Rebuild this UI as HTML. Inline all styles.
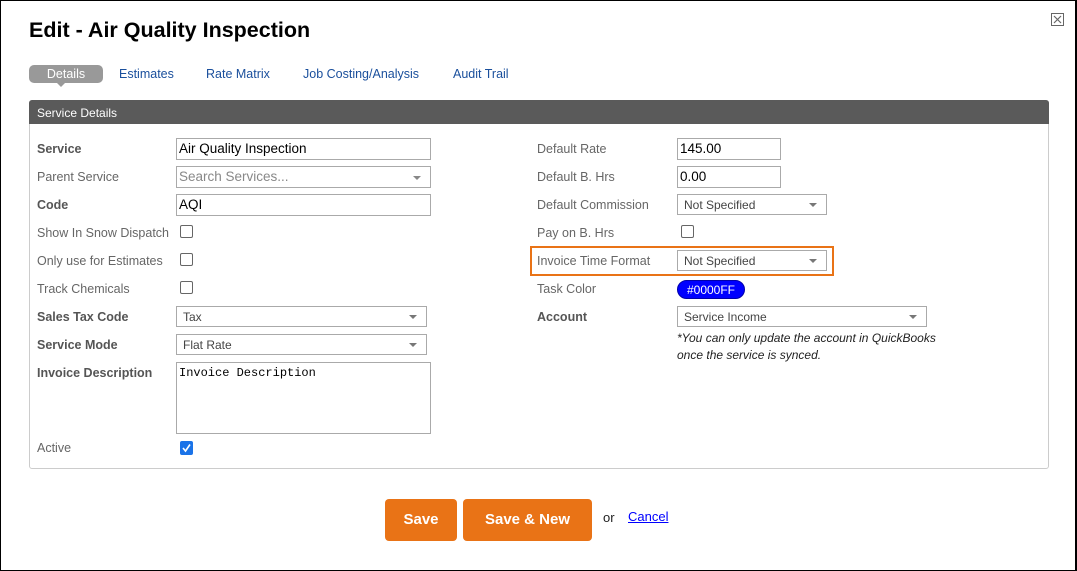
<!DOCTYPE html>
<html><head><style>
*{box-sizing:border-box;margin:0;padding:0}
body{width:1077px;height:571px;background:#fff;font-family:"Liberation Sans",sans-serif;position:relative;overflow:hidden}
.frame{position:absolute;left:0;top:0;width:1077px;height:571px;border:1px solid #000;border-right-width:2px}
.a{position:absolute}
h1{position:absolute;left:29px;top:18px;font-size:21.5px;font-weight:bold;color:#000}
.tab{position:absolute;top:67px;font-size:12.5px;color:#1a4f9c}
.lbl{position:absolute;font-size:12.5px;color:#666}
.b{font-weight:bold;color:#555}
.inp{position:absolute;height:22px;border:1px solid #aaa;font-size:13.5px;color:#000;padding:2px 2px;background:#fff}
.sel{position:absolute;height:21px;border:1px solid #aaa;font-size:12px;color:#444;padding:3px 6px;background:#fff}
.sel:after{content:"";position:absolute;right:9px;top:8px;border:4px solid transparent;border-top:4px solid #777;border-bottom:0}
.cb{position:absolute;width:13px;height:13px;border:1px solid #666;border-radius:2px;background:#fff}
.btn{position:absolute;top:499px;height:42px;background:#e97316;color:#fff;font-weight:bold;font-size:15px;border-radius:4px;text-align:center;line-height:42px}
</style></head><body>
<div class="frame"></div>
<h1>Edit - Air Quality Inspection</h1>
<div class="a" style="left:1051px;top:13px;width:13px;height:13px;border:1px solid #666"><svg width="11" height="11" style="position:absolute;left:0;top:0"><path d="M2 2L9 9M9 2L2 9" stroke="#666" stroke-width="1.2"/></svg></div>
<div class="a" style="left:29px;top:65px;width:74px;height:18px;background:#999;border-radius:5px;color:#fff;font-size:12.5px;text-align:center;line-height:18px">Details</div>
<div class="a" style="left:57px;top:83px;border:4px solid transparent;border-top:4px solid #999"></div>
<div class="tab" style="left:119px">Estimates</div>
<div class="tab" style="left:206px">Rate Matrix</div>
<div class="tab" style="left:303px">Job Costing/Analysis</div>
<div class="tab" style="left:453px">Audit Trail</div>
<div class="a" style="left:29px;top:100px;width:1020px;height:369px;border:1px solid #ccc;border-radius:3px"></div>
<div class="a" style="left:29px;top:100px;width:1020px;height:24px;background:#5a5a5a;color:#fff;font-size:12px;padding:6px 8px;border-radius:3px 3px 0 0">Service Details</div>

<div class="lbl b" style="left:37px;top:142px">Service</div>
<div class="inp" style="left:176px;top:138px;width:255px">Air Quality Inspection</div>
<div class="lbl" style="left:37px;top:170px">Parent Service</div>
<div class="inp" style="left:176px;top:166px;width:255px;color:#888">Search Services...</div>
<div class="a" style="left:413px;top:176px;border:4px solid transparent;border-top:4px solid #888"></div>
<div class="lbl b" style="left:37px;top:198px">Code</div>
<div class="inp" style="left:176px;top:194px;width:255px">AQI</div>
<div class="lbl" style="left:37px;top:226px">Show In Snow Dispatch</div>
<div class="cb" style="left:180px;top:225px"></div>
<div class="lbl" style="left:37px;top:254px">Only use for Estimates</div>
<div class="cb" style="left:180px;top:253px"></div>
<div class="lbl" style="left:37px;top:282px">Track Chemicals</div>
<div class="cb" style="left:180px;top:281px"></div>
<div class="lbl b" style="left:37px;top:310px">Sales Tax Code</div>
<div class="sel" style="left:176px;top:306px;width:251px">Tax</div>
<div class="lbl b" style="left:37px;top:338px">Service Mode</div>
<div class="sel" style="left:176px;top:334px;width:251px">Flat Rate</div>
<div class="lbl b" style="left:37px;top:366px">Invoice Description</div>
<div class="a" style="left:176px;top:362px;width:255px;height:72px;border:1px solid #aaa;font-family:'Liberation Mono',monospace;font-size:12px;padding:3px 2px">Invoice Description</div>
<div class="lbl" style="left:37px;top:441px">Active</div>
<div class="a" style="left:180px;top:441px;width:13px;height:14px;background:#1a73e8;border-radius:2px"><svg width="13" height="14" style="position:absolute"><path d="M3 7L5.5 10L10 3.5" stroke="#fff" stroke-width="1.6" fill="none"/></svg></div>

<div class="lbl" style="left:537px;top:142px">Default Rate</div>
<div class="inp" style="left:677px;top:138px;width:104px">145.00</div>
<div class="lbl" style="left:537px;top:170px">Default B. Hrs</div>
<div class="inp" style="left:677px;top:166px;width:104px">0.00</div>
<div class="lbl" style="left:537px;top:198px">Default Commission</div>
<div class="sel" style="left:677px;top:194px;width:150px">Not Specified</div>
<div class="lbl" style="left:537px;top:226px">Pay on B. Hrs</div>
<div class="cb" style="left:681px;top:225px"></div>
<div class="a" style="left:530px;top:246px;width:304px;height:30px;border:2px solid #e97316"></div>
<div class="lbl" style="left:537px;top:254px">Invoice Time Format</div>
<div class="sel" style="left:677px;top:250px;width:150px">Not Specified</div>
<div class="lbl" style="left:537px;top:282px">Task Color</div>
<div class="a" style="left:677px;top:280px;width:68px;height:19px;background:#0000ff;border-radius:10px;color:#fff;font-size:12px;text-align:center;line-height:19px;border:1px solid #0000aa">#0000FF</div>
<div class="lbl b" style="left:537px;top:310px">Account</div>
<div class="sel" style="left:677px;top:306px;width:250px">Service Income</div>
<div class="a" style="left:677px;top:330px;font-size:12px;font-style:italic;color:#222;line-height:17px">*You can only update the account in QuickBooks<br>once the service is synced.</div>

<div class="btn" style="left:385px;width:72px">Save</div>
<div class="btn" style="left:463px;width:129px">Save &amp; New</div>
<div class="a" style="left:603px;top:510px;font-size:13px;color:#222">or</div>
<div class="a" style="left:628px;top:509px;font-size:13px;color:#00f;text-decoration:underline">Cancel</div>
</body></html>
